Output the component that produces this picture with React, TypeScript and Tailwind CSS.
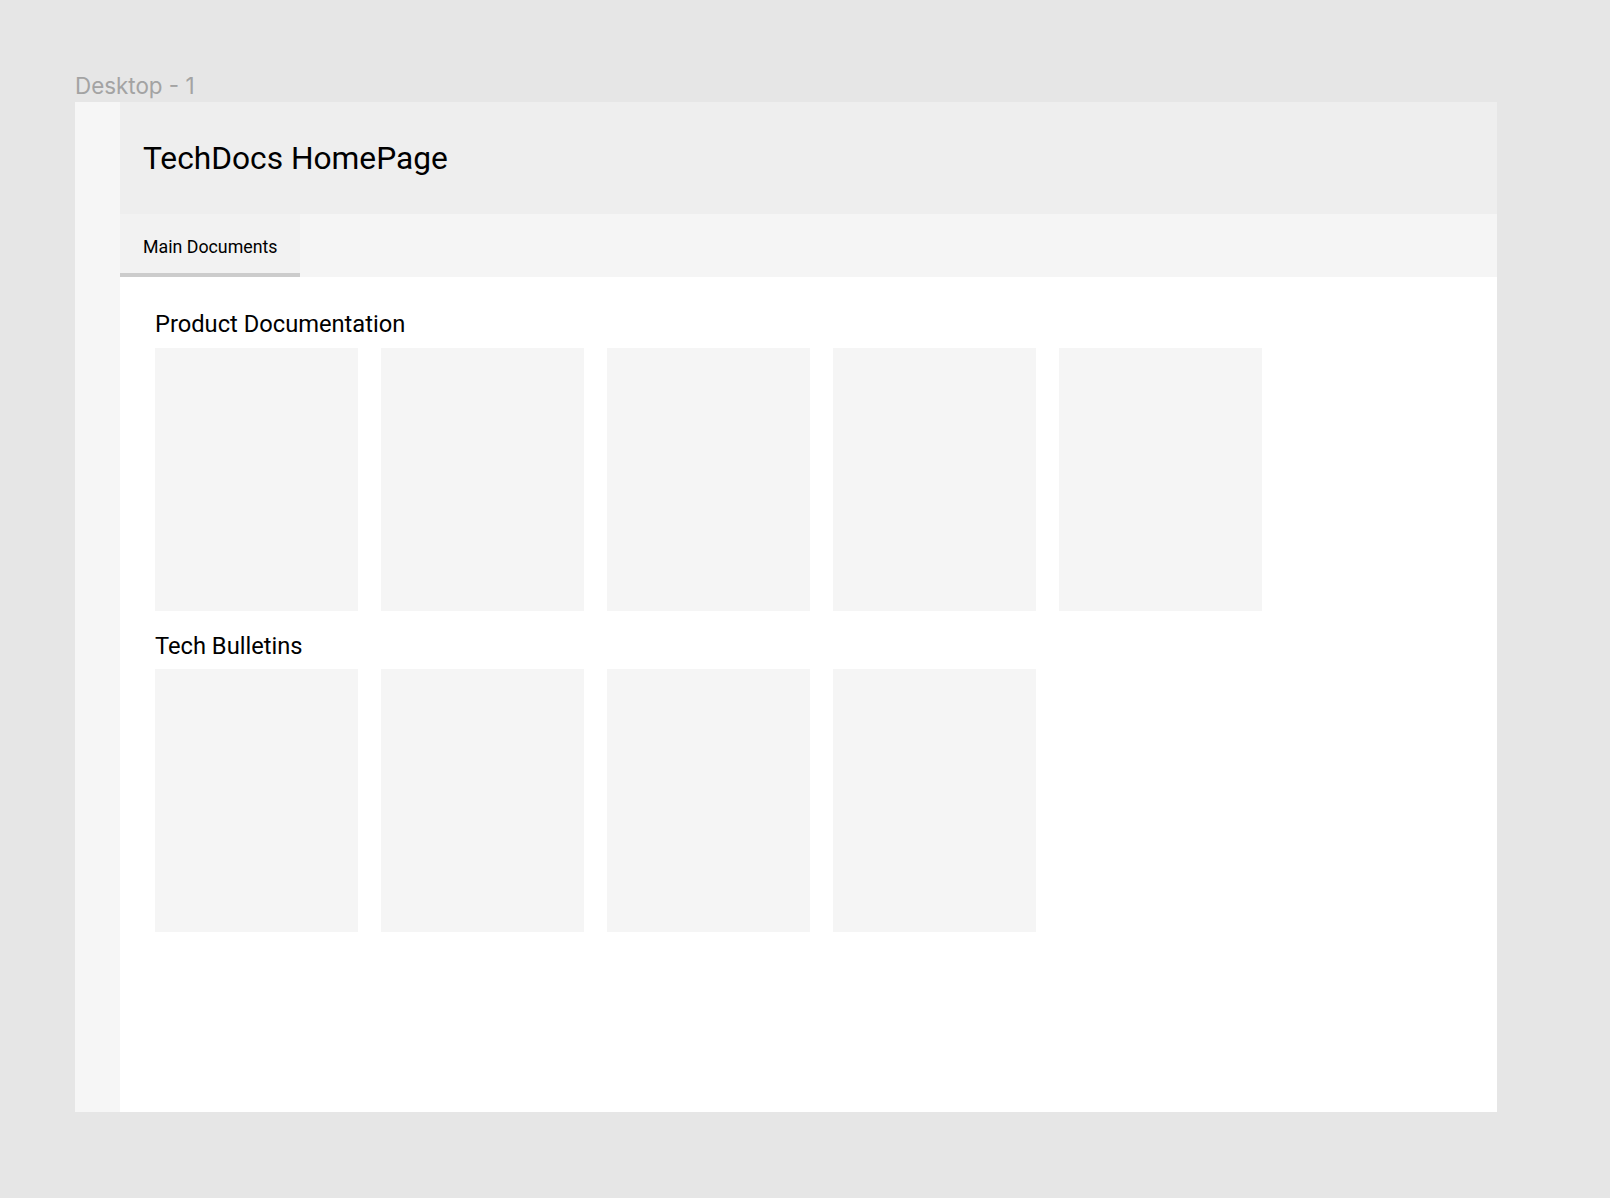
const productDocs = [1, 2, 3, 4, 5];
const bulletins = [1, 2, 3, 4];

function DocCard() {
  return <div className="w-[203px] h-[263px] bg-[#f5f5f5] shrink-0" />;
}

export default function App() {
  return (
    <div className="min-h-[1198px] bg-[#e6e6e6] pt-[73px] pl-[75px] font-['Roboto',sans-serif]">
      {/* frame label */}
      <div className="font-['Inter',sans-serif] text-[22.4px] leading-[26px] text-[#a3a3a3] mb-[3px]">
        Desktop - 1
      </div>

      <div className="w-[1422px] h-[1010px] bg-white flex">
        {/* sidebar */}
        <div className="w-[45px] bg-[#f6f6f6] shrink-0" />

        <div className="flex-1 flex flex-col">
          {/* header */}
          <div className="h-[112px] bg-[#eeeeee] pl-[23px] pt-[39px]">
            <h1 className="text-[31.7px] leading-[36px] text-black">TechDocs HomePage</h1>
          </div>

          {/* tabs */}
          <div className="h-[63px] bg-[#f5f5f5] flex">
            <div className="w-[180px] h-full bg-[#f2f2f2] border-b-4 border-[#cccccc] pl-[23px] pt-[22px]">
              <span className="text-[17.8px] leading-[20px] text-black">Main Documents</span>
            </div>
          </div>

          {/* content */}
          <div className="flex-1 pl-[35px] pt-[33px]">
            <h2 className="text-[23.7px] leading-[28px] text-black">Product Documentation</h2>
            <div className="flex gap-[23px] mt-[10px]">
              {productDocs.map((i) => (
                <DocCard key={i} />
              ))}
            </div>

            <h2 className="text-[23.7px] leading-[28px] text-black mt-[21px]">Tech Bulletins</h2>
            <div className="flex gap-[23px] mt-[9px]">
              {bulletins.map((i) => (
                <DocCard key={i} />
              ))}
            </div>
          </div>
        </div>
      </div>
    </div>
  );
}
